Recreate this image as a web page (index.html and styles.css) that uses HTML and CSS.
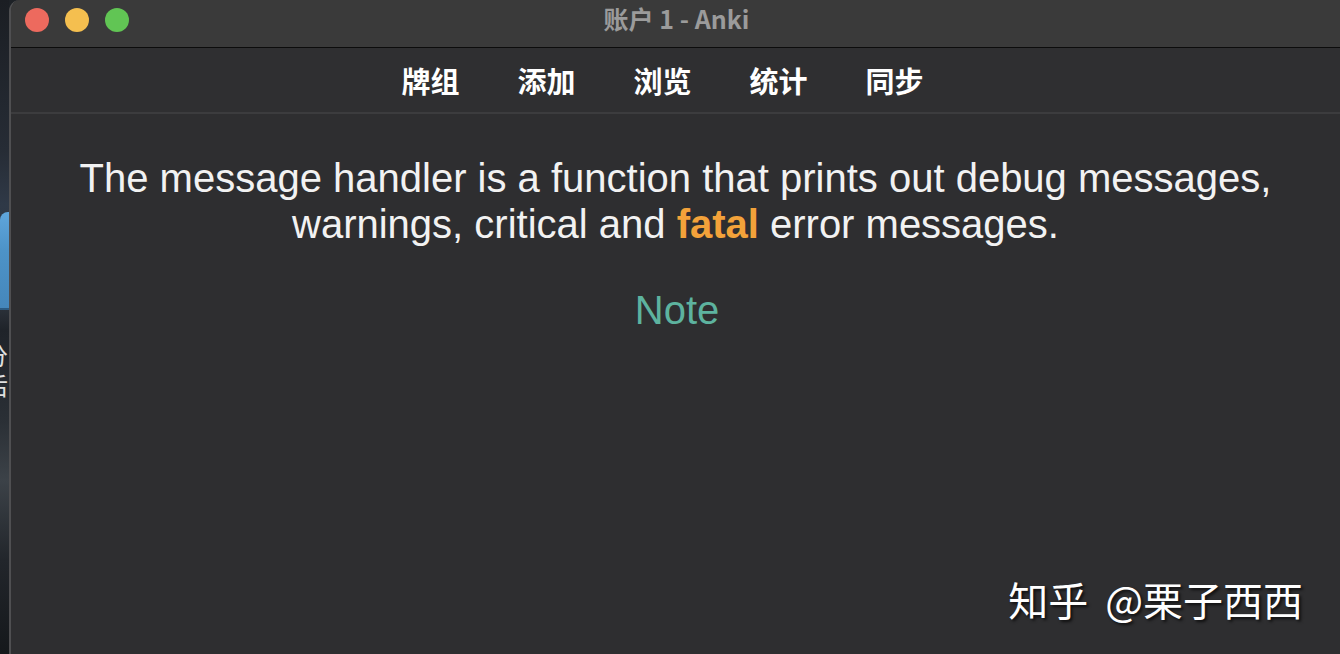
FILE: index.html
```html
<!DOCTYPE html>
<html lang="zh">
<head>
<meta charset="utf-8">
<title>账户 1 - Anki</title>
<link rel="stylesheet" href="styles.css">
</head>
<body>
<div class="screen">
  <div class="desktop">
    <div class="desk-blue"></div>
    <div class="desk-text"><span>分</span><span>后</span></div>
  </div>
  <div class="window">
    <div class="titlebar">
      <div class="lights">
        <span class="light red"></span>
        <span class="light yellow"></span>
        <span class="light green"></span>
      </div>
      <div class="title">账户 1 - Anki</div>
    </div>
    <nav class="toolbar">
      <span class="tool">牌组</span>
      <span class="tool">添加</span>
      <span class="tool">浏览</span>
      <span class="tool">统计</span>
      <span class="tool">同步</span>
    </nav>
    <main class="card">
      <div class="front">The message handler is a function that prints out debug messages, warnings, critical and <b class="hl">fatal</b> error messages.</div>
      <div class="note">Note</div>
    </main>
    <div class="watermark">知乎 @栗子西西</div>
  </div>
</div>
</body>
</html>
```

FILE: styles.css
```css
html, body {
  margin: 0;
  padding: 0;
  width: 1340px;
  height: 654px;
  overflow: hidden;
  background: #1d2126;
}

.screen {
  display: flex;
  width: 1340px;
  height: 654px;
}

.desktop {
  width: 9px;
  flex: none;
  overflow: hidden;
  background: linear-gradient(to bottom, #1b1e23 0, #262c35 150px, #2f3947 205px, #2a3038 310px, #1f2329 330px, #2a2f35 420px, #3c4248 480px, #22262b 560px, #15181b 654px);
  display: flex;
  flex-direction: column;
}

.desk-blue {
  margin-top: 212px;
  height: 96px;
  border-top-left-radius: 8px;
  background: linear-gradient(to bottom, #5fa6dc 0, #4d93c8 40%, #4587bb 100%);
  border-bottom: 2px solid #2c5a80;
}

.desk-text {
  margin-top: 30px;
  display: flex;
  flex-direction: column;
  font-family: "Noto Sans CJK SC", sans-serif;
  font-size: 24px;
  line-height: 30px;
  color: #e0e0e0;
  font-weight: 400;
}

.desk-text span {
  margin-left: -16px;
}

.window {
  flex: 1;
  position: relative;
  display: flex;
  flex-direction: column;
  background: #2e2e30;
  border-left: 2px solid #4f4f51;
  border-top-left-radius: 11px;
  overflow: hidden;
}

.titlebar {
  height: 47px;
  flex: none;
  background: #3a3a3a;
  border-bottom: 1px solid #0c0c0c;
  display: flex;
  align-items: center;
  justify-content: center;
  position: relative;
}

.lights {
  position: absolute;
  left: 14px;
  top: 8px;
  display: flex;
  gap: 16px;
}

.light {
  width: 24px;
  height: 24px;
  border-radius: 50%;
  display: block;
}

.red { background: #ed6a5e; }
.yellow { background: #f5bf4f; }
.green { background: #61c554; }

.title {
  font-family: "Noto Sans CJK SC", "Liberation Sans", sans-serif;
  font-size: 25px;
  font-weight: 700;
  color: #9b9b9b;
  margin-top: -12px;
  margin-left: 2px;
}

.toolbar {
  height: 64px;
  flex: none;
  background: #2f2f31;
  border-bottom: 2px solid #3c3c3e;
  display: flex;
  align-items: center;
  justify-content: center;
  gap: 58px;
  padding-right: 26px;
}

.tool {
  font-family: "Noto Sans CJK SC", sans-serif;
  font-size: 29px;
  font-weight: 700;
  color: #ffffff;
  line-height: 1;
}

.card {
  flex: 1;
  padding: 41px 40px 0;
  font-family: "Liberation Sans", Arial, sans-serif;
  font-size: 40px;
  color: #f2f2f2;
  text-align: center;
}

.front {
  line-height: 46px;
}

.hl {
  color: #f3a23a;
  font-weight: 700;
}

.note {
  margin-top: 40px;
  line-height: 46px;
  color: #5db39f;
  font-size: 40px;
  padding-left: 3px;
}

.watermark {
  position: absolute;
  right: 37px;
  top: 570px;
  font-family: "Noto Sans CJK SC", sans-serif;
  font-size: 40px;
  font-weight: 400;
  word-spacing: 8px;
  color: #ffffff;
  text-shadow: 2px 2px 3px rgba(0, 0, 0, 0.7);
  white-space: nowrap;
}
```
